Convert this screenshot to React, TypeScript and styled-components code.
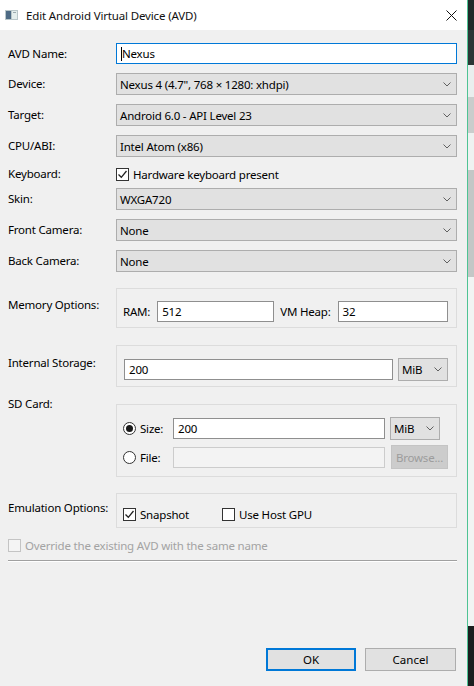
import React from "react";
import styled, { createGlobalStyle } from "styled-components";

const Global = createGlobalStyle`
  html, body { margin: 0; padding: 0; background: #f0f0f0; }
  body { font-family: "Noto Sans", "Open Sans", sans-serif; font-size: 11.5px; color: #000; }
  * { box-sizing: border-box; }
`;

const FONT = "11.5px";

const Page = styled.div`
  display: flex;
  width: 474px;
  height: 686px;
  overflow: hidden;
`;

const Dialog = styled.div`
  width: 467px;
  flex: none;
  display: flex;
  flex-direction: column;
  background: #f0f0f0;
`;

const TitleBar = styled.div`
  height: 30px;
  flex: none;
  background: #fff;
  display: flex;
  align-items: center;
  padding: 0 10px 0 5px;
  gap: 8px;
`;

const TitleText = styled.div`
  flex: 1;
  font-size: ${FONT};
  letter-spacing: -0.15px;
  color: #111;
`;

const Body = styled.div`
  flex: 1;
  display: flex;
  flex-direction: column;
  padding: 13px 10px 15px 8px;
`;

const Row = styled.div<{ $mt?: number; $align?: string; $h?: number }>`
  display: grid;
  grid-template-columns: 108px 1fr;
  align-items: ${(p) => p.$align || "center"};
  margin-top: ${(p) => p.$mt ?? 9}px;
  ${(p) => (p.$h ? `height: ${p.$h}px;` : "")}
`;

const Label = styled.div<{ $pt?: number }>`
  font-size: ${FONT};
  line-height: 16px;
  letter-spacing: -0.2px;
  padding-top: ${(p) => p.$pt ?? 0}px;
  white-space: nowrap;
`;

const TextInput = styled.div<{ $focus?: boolean; $disabled?: boolean; $w?: number }>`
  height: 21px;
  ${(p) => (p.$w ? `width: ${p.$w}px; flex: none;` : "flex: 1; min-width: 0;")}
  background: ${(p) => (p.$disabled ? "#f3f3f3" : "#fff")};
  border: 1px solid ${(p) => (p.$focus ? "#0078d7" : p.$disabled ? "#cccccc" : "#8f8f8f")};
  display: flex;
  align-items: center;
  padding-left: 4px;
  font-size: ${FONT};
  letter-spacing: -0.2px;
  white-space: nowrap;
`;

const Caret = styled.span`
  display: inline-block;
  width: 1px;
  height: 14px;
  background: #000;
`;

const Select = styled.div<{ $w?: number; $h?: number }>`
  height: ${(p) => p.$h ?? 22}px;
  ${(p) => (p.$w ? `width: ${p.$w}px; flex: none;` : "")}
  background: #e1e1e1;
  border: 1px solid #adadad;
  display: flex;
  align-items: center;
  justify-content: space-between;
  padding: 0 5px 0 3px;
  font-size: ${FONT};
  letter-spacing: -0.2px;
  white-space: nowrap;
`;

const CheckLine = styled.label<{ $disabled?: boolean; $w?: number }>`
  display: flex;
  align-items: center;
  gap: 4px;
  height: 13px;
  font-size: ${FONT};
  letter-spacing: -0.2px;
  color: ${(p) => (p.$disabled ? "#a3a3a3" : "#000")};
  ${(p) => (p.$w ? `width: ${p.$w}px; flex: none;` : "")}
  white-space: nowrap;
`;

const OverrideLine = styled(CheckLine)`
  margin-top: 11px;
`;

const Box = styled.span<{ $disabled?: boolean }>`
  width: 13px;
  height: 13px;
  flex: none;
  border: 1px solid ${(p) => (p.$disabled ? "#c4c4c4" : "#333")};
  background: ${(p) => (p.$disabled ? "#f4f4f4" : "#fff")};
  display: flex;
  align-items: center;
  justify-content: center;
`;

const Radio = styled.span`
  width: 13px;
  height: 13px;
  flex: none;
  border-radius: 50%;
  border: 1px solid #333;
  background: #fff;
  display: flex;
  align-items: center;
  justify-content: center;
`;

const RadioDot = styled.span`
  width: 7px;
  height: 7px;
  border-radius: 50%;
  background: #1a1a1a;
`;

const Group = styled.div<{ $mt?: number; $pb?: number; $pl?: number }>`
  border: 1px solid #dcdcdc;
  padding: 12px 8px ${(p) => p.$pb ?? 5}px ${(p) => p.$pl ?? 6}px;
  margin-top: ${(p) => p.$mt ?? 0}px;
`;

const GroupLine = styled.div<{ $h?: number }>`
  display: flex;
  align-items: center;
  height: ${(p) => p.$h ?? 21}px;
`;

const InlineLabel = styled.span<{ $ml?: number; $mr?: number }>`
  margin-left: ${(p) => p.$ml ?? 0}px;
  margin-right: ${(p) => p.$mr ?? 0}px;
  font-size: ${FONT};
  letter-spacing: -0.2px;
  white-space: nowrap;
`;

const SdGrid = styled.div`
  display: grid;
  grid-template-columns: 44px 1fr 57px;
  grid-template-rows: 23px 24px;
  column-gap: 6px;
  row-gap: 5px;
  align-items: center;
`;

const RadioLine = styled.div`
  display: flex;
  align-items: center;
  gap: 4px;
  font-size: ${FONT};
  letter-spacing: -0.2px;
`;

const UnitCell = styled.div`
  margin-left: -1px;
`;

const BrowseButton = styled.div`
  height: 24px;
  background: #cccccc;
  border: 1px solid #c4c4c4;
  color: #9c9c9c;
  display: flex;
  align-items: center;
  justify-content: center;
  font-size: ${FONT};
  letter-spacing: -0.2px;
`;

const Separator = styled.div`
  margin-top: 8px;
  border-top: 1px solid #a0a0a0;
  border-bottom: 1px solid #fff;
`;

const Spacer = styled.div`
  flex: 1;
`;

const ButtonRow = styled.div`
  display: flex;
  justify-content: flex-end;
  gap: 9px;
  padding-right: 1px;
`;

const Button = styled.div<{ $default?: boolean; $w: number }>`
  width: ${(p) => p.$w}px;
  height: 23px;
  background: #e1e1e1;
  border: ${(p) => (p.$default ? "2px solid #0078d7" : "1px solid #adadad")};
  display: flex;
  align-items: center;
  justify-content: center;
  font-size: ${FONT};
`;

const Backdrop = styled.div`
  flex: 1;
  display: flex;
  flex-direction: column;
  border-left: 1px solid #4fc394;
`;

const Band = styled.div<{ $h?: number; $c: string }>`
  ${(p) => (p.$h ? `height: ${p.$h}px; flex: none;` : "flex: 1;")}
  background: ${(p) => p.$c};
`;

const Chevron = () => (
  <svg width="8" height="5" viewBox="0 0 8 5">
    <path d="M0.5 0.5 L4 4 L7.5 0.5" fill="none" stroke="#606060" strokeWidth="1" />
  </svg>
);

const Check = () => (
  <svg width="11" height="11" viewBox="0 0 11 11">
    <path d="M1.5 5.5 L4.3 8.3 L9.5 2" fill="none" stroke="#222" strokeWidth="1.3" />
  </svg>
);

const WindowIcon = () => (
  <svg width="13" height="10" viewBox="0 0 13 10">
    <rect x="0" y="0" width="13" height="10" fill="#b9c7c9" />
    <rect x="1" y="1" width="5" height="8" fill="#4d6a84" />
    <rect x="7" y="1" width="5" height="8" fill="#e4eeec" />
    <rect x="8" y="2" width="3" height="1" fill="#9aa9ad" />
  </svg>
);

const CloseIcon = () => (
  <svg width="11" height="11" viewBox="0 0 11 11">
    <path d="M0.5 0.5 L10.5 10.5 M10.5 0.5 L0.5 10.5" stroke="#111" strokeWidth="1" />
  </svg>
);

const SelectField = ({ value }: { value: string }) => (
  <Select>
    <span>{value}</span>
    <Chevron />
  </Select>
);

export default function App() {
  return (
    <>
      <Global />
      <Page>
        <Dialog>
          <TitleBar>
            <WindowIcon />
            <TitleText>Edit Android Virtual Device (AVD)</TitleText>
            <CloseIcon />
          </TitleBar>
          <Body>
            <Row $mt={0}>
              <Label>AVD Name:</Label>
              <TextInput $focus>
                <Caret />
                Nexus
              </TextInput>
            </Row>
            <Row>
              <Label>Device:</Label>
              <SelectField value={'Nexus 4 (4.7", 768 × 1280: xhdpi)'} />
            </Row>
            <Row>
              <Label>Target:</Label>
              <SelectField value="Android 6.0 - API Level 23" />
            </Row>
            <Row>
              <Label>CPU/ABI:</Label>
              <SelectField value="Intel Atom (x86)" />
            </Row>
            <Row $h={13}>
              <Label>Keyboard:</Label>
              <CheckLine>
                <Box>
                  <Check />
                </Box>
                Hardware keyboard present
              </CheckLine>
            </Row>
            <Row>
              <Label>Skin:</Label>
              <SelectField value="WXGA720" />
            </Row>
            <Row>
              <Label>Front Camera:</Label>
              <SelectField value="None" />
            </Row>
            <Row>
              <Label>Back Camera:</Label>
              <SelectField value="None" />
            </Row>
            <Row $mt={16} $align="start">
              <Label $pt={9}>Memory Options:</Label>
              <Group>
                <GroupLine>
                  <InlineLabel $mr={7}>RAM:</InlineLabel>
                  <TextInput $w={117}>512</TextInput>
                  <InlineLabel $ml={6} $mr={7}>VM Heap:</InlineLabel>
                  <TextInput>32</TextInput>
                </GroupLine>
              </Group>
            </Row>
            <Row $mt={17} $align="start">
              <Label $pt={10}>Internal Storage:</Label>
              <Group $pl={7}>
                <GroupLine $h={23}>
                  <TextInput>200</TextInput>
                  <InlineLabel $ml={5} />
                  <Select $w={50} $h={23}>
                    <span>MiB</span>
                    <Chevron />
                  </Select>
                </GroupLine>
              </Group>
            </Row>
            <Row $mt={9} $align="start">
              <Label>SD Card:</Label>
              <Group $mt={8} $pb={7}>
                <SdGrid>
                  <RadioLine>
                    <Radio>
                      <RadioDot />
                    </Radio>
                    Size:
                  </RadioLine>
                  <TextInput>200</TextInput>
                  <UnitCell>
                    <Select $w={50} $h={23}>
                      <span>MiB</span>
                      <Chevron />
                    </Select>
                  </UnitCell>
                  <RadioLine>
                    <Radio />
                    File:
                  </RadioLine>
                  <TextInput $disabled />
                  <BrowseButton>Browse...</BrowseButton>
                </SdGrid>
              </Group>
            </Row>
            <Row $mt={16} $align="start">
              <Label $pt={7}>Emulation Options:</Label>
              <Group>
                <GroupLine $h={16}>
                  <CheckLine $w={99}>
                    <Box>
                      <Check />
                    </Box>
                    Snapshot
                  </CheckLine>
                  <CheckLine>
                    <Box />
                    Use Host GPU
                  </CheckLine>
                </GroupLine>
              </Group>
            </Row>
            <OverrideLine $disabled>
              <Box $disabled />
              Override the existing AVD with the same name
            </OverrideLine>
            <Separator />
            <Spacer />
            <ButtonRow>
              <Button $default $w={90}>
                OK
              </Button>
              <Button $w={91}>Cancel</Button>
            </ButtonRow>
          </Body>
        </Dialog>
        <Backdrop>
          <Band $h={30} $c="#1f2a29" />
          <Band $h={35} $c="#2b3736" />
          <Band $h={32} $c="#e9efee" />
          <Band $h={36} $c="#c9cdcc" />
          <Band $h={37} $c="#eef2f1" />
          <Band $h={107} $c="#c3c7c6" />
          <Band $c="#f1f4f3" />
          <Band $h={60} $c="#1b1f1f" />
        </Backdrop>
      </Page>
    </>
  );
}
